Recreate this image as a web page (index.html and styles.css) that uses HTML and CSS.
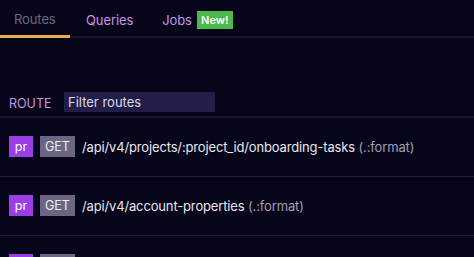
FILE: index.html
```html
<!DOCTYPE html>
<html>
<head>
<meta charset="utf-8">
<link rel="stylesheet" href="styles.css">
</head>
<body>
<div class="app">
  <nav class="tabs">
    <div class="tab active">Routes</div>
    <div class="tab">Queries</div>
    <div class="tab">Jobs <span class="new">New!</span></div>
  </nav>
  <div class="filter">
    <span class="label">ROUTE</span>
    <input class="input" type="text" placeholder="Filter routes">
  </div>
  <div class="row">
    <span class="pr">pr</span>
    <span class="verb">GET</span>
    <span class="path">/api/v4/projects/:project_id/onboarding-tasks <span class="fmt">(.:format)</span></span>
  </div>
  <div class="row">
    <span class="pr">pr</span>
    <span class="verb">GET</span>
    <span class="path">/api/v4/account-properties <span class="fmt">(.:format)</span></span>
  </div>
  <div class="row">
    <span class="pr">pr</span>
    <span class="verb">GET</span>
    <span class="path">/api/v4/users</span>
  </div>
</div>
</body>
</html>
```
FILE: styles.css
```css
html, body {
  margin: 0;
  padding: 0;
  background: #07051a;
  overflow: hidden;
}
body {
  font-family: Inter, "Noto Sans", sans-serif;
  color: #e6e4ef;
}
.app {
  width: 474px;
}
.tabs {
  display: flex;
  height: 36px;
  border-bottom: 2px solid #1b1930;
}
.tab {
  display: flex;
  align-items: center;
  font-size: 13px;
  letter-spacing: -0.1px;
  color: #c595e8;
  height: 38px;
  box-sizing: border-box;
  margin-bottom: -2px;
  padding-top: 2px;
}
.tab.active {
  color: #6a6880;
  width: 70px;
  padding-left: 14px;
  border-bottom: 3px solid #efa94a;
}
.tab:nth-child(2) {
  padding-left: 16px;
  padding-right: 29px;
}
.new {
  display: inline-flex;
  align-items: center;
  justify-content: center;
  margin-left: 5px;
  background: #4cb84f;
  color: #fff;
  font-size: 11px;
  font-weight: 600;
  letter-spacing: 0;
  width: 36px;
  height: 18px;
  margin-top: -1px;
}
.filter {
  display: flex;
  align-items: center;
  margin-top: 52px;
  padding: 0 0 0 9px;
  height: 26px;
  border-bottom: 2px solid #1b1930;
}
.label {
  font-size: 12.5px;
  color: #c496e6;
  width: 55px;
}
.input {
  width: 151px;
  height: 20px;
  box-sizing: border-box;
  border: none;
  outline: none;
  background: #231e48;
  color: #e6e4ef;
  font-family: Inter, "Noto Sans", sans-serif;
  font-size: 13px;
  padding: 0 0 0 4px;
  margin: 0 0 2px 0;
}
.input::placeholder {
  color: #dddbe8;
}
.row {
  display: flex;
  align-items: center;
  height: 57px;
  padding: 0 0 1px 9px;
  border-bottom: 1px solid #23213a;
}
.pr {
  display: inline-flex;
  align-items: center;
  justify-content: center;
  width: 24px;
  height: 21px;
  background: #9b3fe4;
  color: #fff;
  font-size: 12.5px;
  margin-right: 7px;
}
.verb {
  display: inline-flex;
  align-items: center;
  justify-content: center;
  width: 35px;
  height: 21px;
  background: #6b6682;
  color: #f0eef6;
  font-size: 12.5px;
  margin-right: 7px;
}
.path {
  font-size: 13px;
  letter-spacing: -0.15px;
  color: #e9e7f1;
}
.fmt {
  color: #a19eb3;
}
```
